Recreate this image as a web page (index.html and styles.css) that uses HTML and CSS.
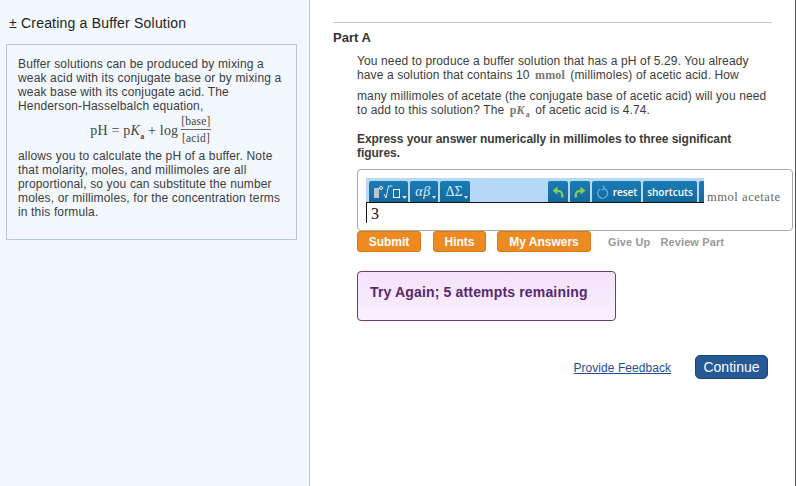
FILE: index.html
```html
<!DOCTYPE html>
<html lang="en">
<head>
    <meta charset="UTF-8">
    <title>Creating a Buffer Solution</title>
    <link rel="stylesheet" href="styles.css">
</head>
<body>
    <div class="page">
        <aside class="sidebar">
            <h2 class="sidebar-title">± Creating a Buffer Solution</h2>
            <div class="intro">
                <p>Buffer solutions can be produced by mixing a weak acid with its conjugate base or by mixing a weak base with its conjugate acid. The Henderson-Hasselbalch equation,</p>
                <div class="equation">
                    <span>pH = p<i>K</i><sub>a</sub> + log</span>
                    <span class="fraction"><span class="num">[base]</span><span>[acid]</span></span>
                </div>
                <p>allows you to calculate the pH of a buffer. Note that molarity, moles, and millimoles are all proportional, so you can substitute the number moles, or millimoles, for the concentration terms in this formula.</p>
            </div>
        </aside>

        <main class="content">
            <h3 class="part-title">Part A</h3>
            <div class="question">
                <p class="line-tight">You need to produce a buffer solution that has a pH of 5.29. You already have a solution that contains 10 <span class="math">mmol</span> (millimoles) of acetic acid. How</p>
                <p class="line-tight line-next">many millimoles of acetate (the conjugate base of acetic acid) will you need to add to this solution? The <span class="math">p<i>K</i><sub>a</sub></span> of acetic acid is 4.74.</p>
                <p class="instruction">Express your answer numerically in millimoles to three significant figures.</p>

                <div class="answer-box">
                    <div class="editor">
                        <div class="toolbar">
                            <span class="tool tool-template">
                                <svg width="36" height="14" viewBox="0 0 36 14">
                                    <rect x="3" y="3" width="5" height="10" fill="#b9c4cc"/>
                                    <circle cx="10" cy="3" r="1.500" fill="none" stroke="#fff"/>
                                    <path d="M13 9l2 4 2.500-12h4" fill="none" stroke="#d6ecfb"/>
                                    <rect x="22.500" y="4.500" width="6" height="8" fill="none" stroke="#fff"/>
                                    <path d="M31 11h5l-2.500 3z" fill="#cfe6f5"/>
                                </svg>
                            </span>
                            <span class="tool tool-greek"><i>αβ</i><b class="caret"></b></span>
                            <span class="tool tool-greek tool-wide">ΔΣ<b class="caret"></b></span>
                            <span class="toolbar-gap"></span>
                            <span class="tool tool-icon">
                                <svg width="14" height="14" viewBox="0 0 14 14"><path d="M11 12.500c1-4-.5-7-5-6.500" fill="none" stroke="#7fd05a" stroke-width="2.200"/><path d="M6.500 1.500L1.500 5.800l5 3.700z" fill="#7fd05a"/></svg>
                            </span>
                            <span class="tool tool-icon">
                                <svg width="14" height="14" viewBox="0 0 14 14"><path d="M3 12.500c-1-4 .5-7 5-6.500" fill="none" stroke="#7fd05a" stroke-width="2.200"/><path d="M7.500 1.500l5 4.300-5 3.700z" fill="#7fd05a"/></svg>
                            </span>
                            <span class="tool tool-reset">
                                <svg width="13" height="14" viewBox="0 0 13 14"><path d="M4 4a5 5 0 1 0 4.500-.4M7 .5l1.500 3L5.500 5" fill="none" stroke="#62b8ee" stroke-width="1.200"/></svg>
                                reset
                            </span>
                            <span class="tool tool-text">shortcuts</span>
                            <span class="tool tool-cut"></span>
                        </div>
                        <div class="entry">3</div>
                    </div>
                    <span class="unit">mmol acetate</span>
                </div>

                <div class="actions">
                    <a class="btn btn-submit">Submit</a>
                    <a class="btn btn-hints">Hints</a>
                    <a class="btn btn-answers">My Answers</a>
                    <span class="muted give-up">Give Up</span>
                    <span class="muted">Review Part</span>
                </div>

                <div class="feedback">Try Again; 5 attempts remaining</div>
            </div>

            <div class="footer">
                <a class="feedback-link">Provide Feedback</a>
                <a class="btn-continue">Continue</a>
            </div>
        </main>
    </div>
</body>
</html>
```

FILE: styles.css
```css
html, body {
    margin: 0;
    padding: 0;
    height: 100%;
    overflow: hidden;
}

body {
    font-family: "Liberation Sans", Arial, sans-serif;
    font-size: 12px;
    line-height: 14px;
    color: #3c3c3c;
    background-color: #fff;
}

p {
    margin: 0;
}

.page {
    display: flex;
    width: 795px;
    height: 486px;
    border-right: 1px solid #555;
}

.sidebar {
    box-sizing: border-box;
    width: 310px;
    flex-shrink: 0;
    padding: 15px 12px 0 6px;
    background-color: #f3f8fe;
    border-right: 1px solid #b9c8d8;
}

.sidebar-title {
    margin: 0 0 13px 3px;
    font-size: 14px;
    line-height: 16px;
    font-weight: normal;
    letter-spacing: 0.2px;
    color: #222;
}

.intro {
    box-sizing: border-box;
    height: 196px;
    padding: 12px 11px 0 11px;
    border: 1px solid #b9c8d8;
    letter-spacing: 0.15px;
}

.equation {
    display: flex;
    justify-content: center;
    align-items: center;
    gap: 3px;
    height: 36px;
    padding-right: 2px;
    font-family: "Liberation Serif", "Times New Roman", serif;
    font-size: 14px;
    letter-spacing: 0.2px;
    color: #444;
}

.equation sub, .math sub {
    font-size: 8px;
    line-height: 0;
    font-weight: bold;
}

.fraction {
    display: flex;
    flex-direction: column;
    margin-top: -2px;
    text-align: center;
    font-size: 11.500px;
    line-height: 15px;
    letter-spacing: 0.2px;
}

.fraction .num {
    border-bottom: 1px solid #666;
    margin-bottom: 1px;
}

.content {
    flex: 1;
    min-width: 0;
    padding: 22px 23px 0 23px;
    position: relative;
}

.part-title {
    margin: 0;
    padding-top: 7px;
    border-top: 1px solid #ccc;
    font-size: 13px;
    line-height: 15px;
    font-weight: bold;
    color: #333;
}

.question {
    margin: 9px 0 0 24px;
    width: 436px;
    letter-spacing: 0.12px;
}

.line-tight {
    width: 416px;
}

.line-next {
    margin-top: 7px;
}

.math {
    margin: 0 2px;
    font-family: "Liberation Serif", "Times New Roman", serif;
    font-weight: bold;
    color: #777;
    font-size: 12px;
}

.math i {
    padding-right: 1px;
}

.instruction {
    margin-top: 15px;
    width: 400px;
    font-weight: bold;
    letter-spacing: -0.05px;
}

.answer-box {
    box-sizing: border-box;
    display: flex;
    align-items: flex-start;
    width: 436px;
    height: 62px;
    margin-top: 9px;
    padding: 8px 0 0 8px;
    background-color: #fff;
    border: 1px solid #aaa;
    border-radius: 4px;
    letter-spacing: 0;
}

.editor {
    width: 338px;
    flex-shrink: 0;
}

.toolbar {
    display: flex;
    gap: 2px;
    box-sizing: border-box;
    height: 25px;
    padding: 3px 0 0 3px;
    background-color: #b5d9f7;
    border-bottom: 1px solid #111;
    overflow: hidden;
}

.toolbar-gap {
    width: 74px;
    flex-shrink: 0;
}

.tool {
    display: flex;
    align-items: center;
    justify-content: center;
    flex-shrink: 0;
    height: 21px;
    background: linear-gradient(#1b7cb6, #14689c);
    border-radius: 2px 2px 0 0;
    color: #fff;
    font-family: "Open Sans", "Liberation Sans", sans-serif;
    font-size: 10px;
    font-weight: 600;
}

.tool-template {
    width: 39px;
}

.tool-greek {
    position: relative;
    width: 28px;
    padding-right: 2px;
    box-sizing: border-box;
    font-family: "Liberation Serif", "Times New Roman", serif;
    font-size: 14px;
    font-weight: normal;
    color: #d6ecfb;
}

.tool-wide {
    width: 30px;
}

.tool-greek i {
    letter-spacing: 0.5px;
}

.caret {
    position: absolute;
    right: 2px;
    bottom: 3px;
    border-left: 2.500px solid transparent;
    border-right: 2.500px solid transparent;
    border-top: 3px solid #cfe6f5;
}

.tool-icon {
    width: 20px;
}

.tool-reset {
    width: 49px;
    gap: 4px;
}

.tool-text {
    width: 54px;
}

.tool-cut {
    width: 10px;
}

.entry {
    box-sizing: border-box;
    height: 20px;
    padding: 2px 0 0 4px;
    border-left: 1px solid #111;
    font-family: "Liberation Serif", "Times New Roman", serif;
    font-size: 16px;
    line-height: 18px;
    color: #111;
}

.unit {
    margin: 12px 0 0 3px;
    font-family: "Liberation Serif", "Times New Roman", serif;
    font-size: 12.500px;
    letter-spacing: 0.55px;
    color: #666;
    white-space: nowrap;
}

.actions {
    display: flex;
    align-items: center;
    height: 21px;
    font-size: 11px;
    font-weight: bold;
}

.btn {
    box-sizing: border-box;
    height: 21px;
    line-height: 20px;
    text-align: center;
    color: #fff;
    font-size: 12px;
    letter-spacing: 0;
    background-color: #ee8a22;
    border: 1px solid #d97a18;
    border-radius: 3px;
}

.btn-submit {
    width: 64px;
}

.btn-hints {
    width: 53px;
    margin-left: 12px;
}

.btn-answers {
    width: 94px;
    margin-left: 11px;
}

.muted {
    color: #999;
}

.give-up {
    margin: 0 10px 0 17px;
}

.feedback {
    box-sizing: border-box;
    width: 259px;
    height: 50px;
    margin-top: 19px;
    padding: 12px 12px;
    font-size: 14px;
    line-height: 16px;
    font-weight: bold;
    letter-spacing: 0.16px;
    color: #55286f;
    background: linear-gradient(#f4e2fb, #faefff);
    border: 1px solid #6b3a80;
    border-radius: 4px;
}

.footer {
    display: flex;
    justify-content: flex-end;
    align-items: center;
    gap: 24px;
    height: 24px;
    margin: 34px 4px 0 0;
}

.feedback-link {
    margin-top: 2px;
    letter-spacing: 0.05px;
    color: #1f4e8c;
    text-decoration: underline;
}

.btn-continue {
    box-sizing: border-box;
    width: 73px;
    height: 24px;
    line-height: 22px;
    text-align: center;
    font-size: 14px;
    color: #fff;
    background-color: #265a96;
    border: 1px solid #1d4474;
    border-radius: 5px;
}
```
